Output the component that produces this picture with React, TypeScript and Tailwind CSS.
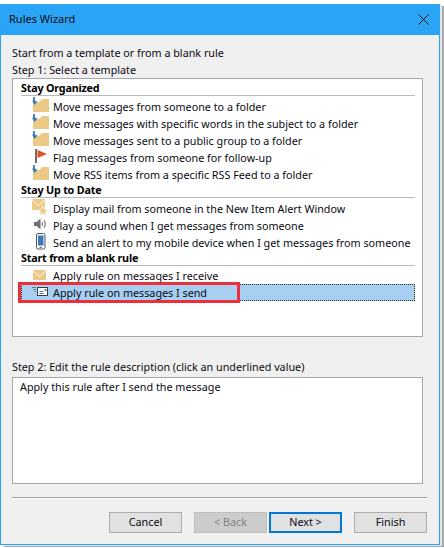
import type { ReactNode } from "react";

function Icon({ children }: { children: ReactNode }) {
  return (
    <svg width="22" height="17" viewBox="0 0 22 17" className="overflow-visible">
      {children}
    </svg>
  );
}

function MoveIcon() {
  return (
    <Icon>
      <path d="M2 4h6l3-3h7v13H2z" fill="#edc987" />
      <path d="M3 -1v3q0 1.500 1.500 1.500" fill="none" stroke="#3c78bd" strokeWidth="1.800" />
      <path d="M1 2.500l2.500 4.500 3-3.500z" fill="#3c78bd" />
    </Icon>
  );
}

function FlagIcon() {
  return (
    <Icon>
      <rect x="4" y="0" width="2" height="14" fill="#6b6b6b" />
      <path d="M6.500 1l9.500 4-9.500 4z" fill="#e0532f" />
    </Icon>
  );
}

function MailStarIcon() {
  return (
    <Icon>
      <path d="M1 -1h13v11H1z" fill="#edc987" />
      <path d="M1 0l6.500 5.500L14 0" fill="none" stroke="#fff" strokeWidth="0.900" />
      <path d="M12 6l1.500 3.400 3.500.3-2.700 2.300.9 3.500-3.200-1.900-3.200 1.900.9-3.500L7 9.700l3.500-.3z" fill="#edc987" stroke="#fff" strokeWidth="0.600" />
    </Icon>
  );
}

function SoundIcon() {
  return (
    <Icon>
      <path d="M3 5h2.500L9.500 1.500v11L5.500 9H3z" fill="#6f7175" />
      <path d="M11 5q1.200 2 0 4M13 3q2.400 4 0 8" fill="none" stroke="#85878b" strokeWidth="1.300" />
    </Icon>
  );
}

function PhoneIcon() {
  return (
    <Icon>
      <rect x="5.500" y="-0.500" width="8.500" height="15.500" rx="1.500" fill="#fff" stroke="#50545a" />
      <rect x="7" y="1.500" width="5.500" height="10" fill="#3f78b8" />
      <rect x="8.500" y="12.800" width="2.500" height="1" fill="#50545a" />
    </Icon>
  );
}

function MailIcon() {
  return (
    <Icon>
      <path d="M2 3h13v10H2z" fill="#edc987" />
      <path d="M2 4l6.500 5.500L15 4" fill="none" stroke="#fff" strokeWidth="0.900" />
    </Icon>
  );
}

function SendIcon() {
  return (
    <Icon>
      <rect x="6.500" y="3.500" width="10" height="8" fill="#fff" stroke="#3a3f45" />
      <path d="M8.500 7.500h4M8.500 9.500h4" stroke="#3a7cc0" />
      <rect x="13.500" y="5" width="2" height="2" fill="#777" />
      <path d="M1 3.500h4M2.500 5.500h2.500M3.500 7.500h1.500" stroke="#777" />
    </Icon>
  );
}

function Heading({ children }: { children: ReactNode }) {
  return (
    <div className="pl-[8px] pr-[7px]">
      <div className="h-[14px] leading-[14px] font-bold tracking-[-0.2px] text-black">{children}</div>
      <div className="h-px bg-[#b9b9c0]" />
    </div>
  );
}

function Row({ icon, children, selected }: { icon: ReactNode; children: ReactNode; selected?: boolean }) {
  return (
    <div className={`ml-[8px] mr-[7px] h-[17px] flex items-center ${selected ? "bg-[#a6cff2] outline-1 -outline-offset-1 outline-dotted outline-[#3a2a1a]" : ""}`}>
      <div className="w-[10px] shrink-0" />
      <div className="w-[22px] shrink-0 flex">{icon}</div>
      <span className="whitespace-nowrap leading-[17px]">{children}</span>
    </div>
  );
}

function Btn({ children, disabled, active }: { children: ReactNode; disabled?: boolean; active?: boolean }) {
  return (
    <div
      className={`w-[73px] h-[21px] shrink-0 flex items-center justify-center ${
        disabled
          ? "bg-[#cccccc] border border-[#bfbfbf] text-[#838383]"
          : active
            ? "bg-[#e1e1e1] border-2 border-[#0078d7]"
            : "bg-[#e1e1e1] border border-[#adadad]"
      }`}
    >
      {children}
    </div>
  );
}

export default function App() {
  return (
    <div className="w-[444px] h-[548px] bg-white pt-[4px] pr-[4px] pb-[3px] font-['Noto_Sans',sans-serif] text-[10.78px] text-[#0a0a12]">
      <div className="h-full flex flex-col bg-[#f0f0f0] border-l border-r border-b border-[#2aa4f4] shadow-[2px_1px_0_#e4e4e4,4px_2px_0_#a8a8a8]">
        <div className="h-[31px] shrink-0 bg-[#2aa4f4] flex items-center justify-between pl-[8px] pr-[10px] text-[11px]">
          <span>Rules Wizard</span>
          <svg width="11" height="11" viewBox="0 0 11 11">
            <path d="M0.500 0.500l10 10M10.500 0.500l-10 10" stroke="#111" strokeWidth="1" />
          </svg>
        </div>

        <div className="flex-1 flex flex-col pl-[11px] pr-[16px]">
          <div className="mt-[10px] h-[16px] leading-[16px]">Start from a template or from a blank rule</div>
          <div className="h-[17px] leading-[17px]">Step 1: Select a template</div>

          <div className="relative h-[259px] bg-white border border-[#a6a6ad] pt-[2px]">
            <Heading>Stay Organized</Heading>
            <div className="pt-[2px]">
              <Row icon={<MoveIcon />}>Move messages from someone to a folder</Row>
              <Row icon={<MoveIcon />}>Move messages with specific words in the subject to a folder</Row>
              <Row icon={<MoveIcon />}>Move messages sent to a public group to a folder</Row>
              <Row icon={<FlagIcon />}>Flag messages from someone for follow-up</Row>
              <Row icon={<MoveIcon />}>Move RSS items from a specific RSS Feed to a folder</Row>
            </div>
            <Heading>Stay Up to Date</Heading>
            <div className="pt-[2px]">
              <Row icon={<MailStarIcon />}>Display mail from someone in the New Item Alert Window</Row>
              <Row icon={<SoundIcon />}>Play a sound when I get messages from someone</Row>
              <Row icon={<PhoneIcon />}>Send an alert to my mobile device when I get messages from someone</Row>
            </div>
            <Heading>Start from a blank rule</Heading>
            <div className="pt-[1px]">
              <Row icon={<MailIcon />}>Apply rule on messages I receive</Row>
              <Row icon={<SendIcon />} selected>Apply rule on messages I send</Row>
            </div>
            <div className="absolute left-[5px] top-[203px] w-[222px] h-[21px] border-[3px] border-[#ee2e38]" />
          </div>

          <div className="mt-[21px] h-[17px] leading-[17px]">Step 2: Edit the rule description (click an underlined value)</div>
          <div className="mt-[2px] h-[107px] bg-white border border-[#a6a6ad] px-[7px] leading-[17px]">
            Apply this rule after I send the message
          </div>

          <div className="mt-[13px] -mr-[4px] h-px bg-[#a0a0a0] border-b border-white box-content" />

          <div className="mt-[13px] flex pl-[97px]">
            <Btn>Cancel</Btn>
            <div className="ml-[12px] shrink-0"><Btn disabled>&lt; Back</Btn></div>
            <div className="ml-[2px] shrink-0"><Btn active>Next &gt;</Btn></div>
            <div className="ml-[12px] shrink-0"><Btn>Finish</Btn></div>
          </div>
        </div>
      </div>
    </div>
  );
}
